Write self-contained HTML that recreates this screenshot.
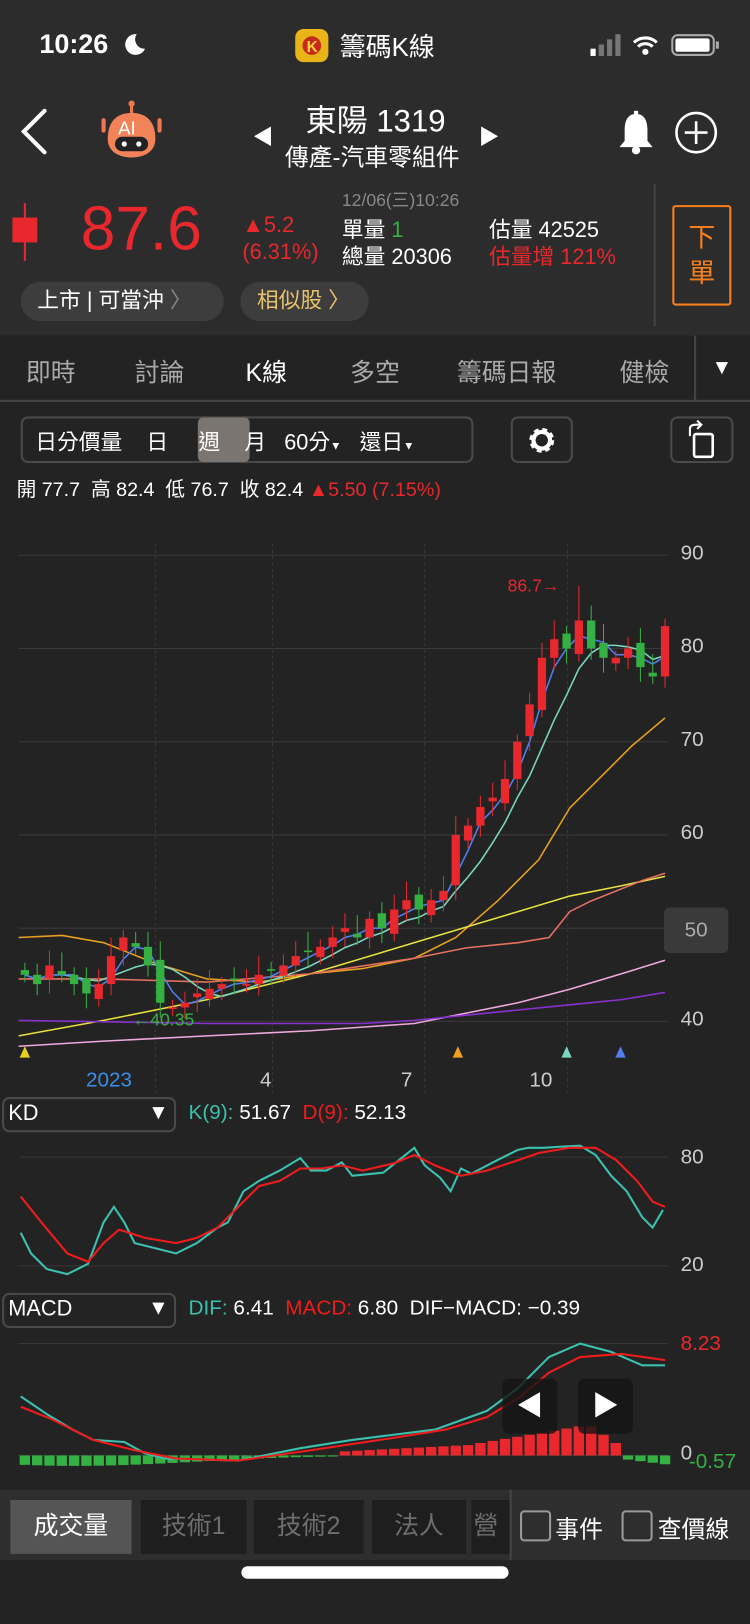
<!DOCTYPE html>
<html><head><meta charset="utf-8"><style>
*{margin:0;padding:0;box-sizing:border-box}
body{width:750px;height:1624px;overflow:hidden;background:#262626;font-family:"Liberation Sans","Noto Sans CJK TC",sans-serif;color:#fff}
#w{position:absolute;left:0;top:0;width:724px;height:1568px;transform:scale(1.03591);transform-origin:0 0;background:#232323}
.a{position:absolute;white-space:nowrap}
.hdr{position:absolute;left:0;top:0;width:724px;height:324px;background:#2c2c2c}
.pill{position:absolute;height:38px;border-radius:19px;background:#3d3d3d;font-size:21px;line-height:38px;padding-left:16px}
.tab{position:absolute;top:340px;font-size:24px;color:#aaa}
.box{position:absolute;border:2px solid #4a4a4a;border-radius:7px}
.ax{position:absolute;left:657px;font-size:20px;color:#ccc}
.bt{position:absolute;top:1448px;height:52px;background:#1e1e1e;color:#6e6e6e;font-size:24px;line-height:52px;text-align:center}
</style></head><body><div id="w">
<div class="hdr"></div>
<div class="a" style="left:38px;top:27px;font-size:26px;font-weight:bold">10:26</div>
<svg class="a" style="left:118px;top:31px" width="24" height="24"><path d="M14 2A10 10 0 1 0 22 16A9 9 0 0 1 14 2Z" fill="#fff"/></svg>
<svg class="a" style="left:283px;top:26px" width="36" height="36"><rect x="2" y="2" width="32" height="32" rx="8" fill="#e8b418"/><circle cx="18" cy="18" r="9" fill="#c62a1b"/><text x="13" y="24" font-size="15" font-weight="bold" fill="#ffd23a" font-family="Liberation Sans">K</text></svg>
<div class="a" style="left:328px;top:26px;font-size:25px">籌碼K線</div>
<svg class="a" style="left:570px;top:32px" width="125" height="24"><rect x="0" y="15" width="5" height="7" fill="#fff"/><rect x="8" y="11" width="5" height="11" fill="#777"/><rect x="16" y="6" width="5" height="16" fill="#777"/><rect x="24" y="1" width="5" height="21" fill="#777"/><path d="M42 9a16 16 0 0 1 22 0M46 13a10 10 0 0 1 14 0" stroke="#fff" stroke-width="3" fill="none"/><circle cx="53" cy="18" r="3" fill="#fff"/><rect x="79" y="2" width="40" height="19" rx="5" fill="none" stroke="#aaa" stroke-width="2"/><rect x="82" y="5" width="33" height="13" rx="2" fill="#fff"/><rect x="121" y="8" width="3" height="7" fill="#aaa"/></svg>
<svg class="a" style="left:16px;top:104px" width="32" height="46"><path d="M27 3L7 23L27 43" stroke="#fff" stroke-width="4" fill="none" stroke-linecap="round"/></svg>
<svg class="a" style="left:94px;top:96px" width="70" height="60"><line x1="33" y1="2" x2="33" y2="14" stroke="#f07850" stroke-width="3"/><circle cx="33" cy="4" r="3" fill="#f07850"/><rect x="4" y="18" width="4" height="14" rx="2" fill="#f07850"/><rect x="58" y="18" width="4" height="14" rx="2" fill="#f07850"/><path d="M10 38C10 20 20 13 33 13C46 13 56 20 56 38C56 50 46 56 33 56C20 56 10 50 10 38Z" fill="#f28359"/><rect x="17" y="36" width="32" height="14" rx="7" fill="#222"/><circle cx="26" cy="43" r="2.5" fill="#fff"/><circle cx="40" cy="43" r="2.5" fill="#fff"/><text x="20" y="34" font-size="18" fill="#fff" font-family="Liberation Sans">AI</text></svg>
<div class="a" style="left:244px;top:116px;font-size:20px">◀</div>
<div class="a" style="left:462px;top:116px;font-size:20px">▶</div>
<div class="a" style="left:295px;top:92px;font-size:30px">東陽 1319</div>
<div class="a" style="left:275px;top:133px;font-size:23px">傳產-汽車零組件</div>
<svg class="a" style="left:594px;top:106px" width="40" height="44"><path d="M20 4C11 4 9 12 9 20L9 30L4 36L36 36L31 30L31 20C31 12 29 4 20 4Z" fill="#fff"/><circle cx="20" cy="39" r="4" fill="#fff"/><rect x="18" y="1" width="4" height="5" fill="#fff"/></svg>
<svg class="a" style="left:650px;top:106px" width="44" height="44"><circle cx="22" cy="22" r="19" stroke="#fff" stroke-width="2.5" fill="none"/><path d="M22 11V33M11 22H33" stroke="#fff" stroke-width="2.5"/></svg>
<svg class="a" style="left:10px;top:196px" width="30" height="56"><line x1="14" y1="0" x2="14" y2="56" stroke="#e8282c" stroke-width="2"/><rect x="2" y="14" width="24" height="24" fill="#e8282c"/></svg>
<div class="a" style="left:78px;top:186px;font-size:60px;color:#e8282c">87.6</div>
<div class="a" style="left:234px;top:206px;font-size:21px;color:#e8282c">▲5.2</div>
<div class="a" style="left:234px;top:232px;font-size:21px;color:#e8282c">(6.31%)</div>
<div class="a" style="left:330px;top:179px;font-size:17px;color:#888">12/06(三)10:26</div>
<div class="a" style="left:330px;top:206px;font-size:21px">單量 <span style="color:#35b043">1</span></div>
<div class="a" style="left:330px;top:232px;font-size:21px">總量 20306</div>
<div class="a" style="left:472px;top:206px;font-size:21px">估量 42525</div>
<div class="a" style="left:472px;top:232px;font-size:21px;color:#e8282c">估量增 121%</div>
<div class="a" style="left:631px;top:178px;width:2px;height:137px;background:#444"></div>
<div class="a" style="left:649px;top:198px;width:57px;height:97px;border:2px solid #f7801c;border-radius:3px;color:#f7801c;font-size:26px;text-align:center;line-height:34px;padding-top:12px">下<br>單</div>
<div class="pill" style="left:20px;top:272px;width:196px">上市 | 可當沖 <span style="color:#888">〉</span></div>
<div class="pill" style="left:232px;top:272px;width:124px;color:#e9c36a">相似股 〉</div>
<div class="a" style="left:0;top:324px;width:724px;height:64px;background:#232323;border-bottom:2px solid #444"></div>
<div class="tab" style="left:25px">即時</div><div class="tab" style="left:130px">討論</div><div class="tab" style="left:237px;color:#fff">K線</div><div class="tab" style="left:338px">多空</div><div class="tab" style="left:441px">籌碼日報</div><div class="tab" style="left:598px">健檢</div>
<div class="a" style="left:670px;top:324px;width:2px;height:64px;background:#444"></div>
<div class="a" style="left:687px;top:344px;font-size:20px">▼</div>
<div class="box" style="left:20px;top:402px;width:437px;height:45px"></div>
<div class="a" style="left:191px;top:403px;width:50px;height:43px;background:#7a7570;border-radius:5px"></div>
<div class="a" style="left:34px;top:411px;font-size:21px">日分價量 &nbsp;&nbsp;&nbsp;日 &nbsp;&nbsp;&nbsp;&nbsp;週 &nbsp;&nbsp;&nbsp;月 &nbsp;&nbsp;60分<span style="font-size:11px">▼</span> &nbsp;&nbsp;還日<span style="font-size:11px">▼</span></div>
<div class="box" style="left:493px;top:402px;width:60px;height:45px"></div>
<svg class="a" style="left:508px;top:410px" width="30" height="30"><circle cx="15" cy="15" r="9" fill="none" stroke="#fff" stroke-width="6" stroke-dasharray="4 3.1"/><circle cx="15" cy="15" r="8" fill="none" stroke="#fff" stroke-width="4"/></svg>
<div class="box" style="left:647px;top:402px;width:61px;height:45px"></div>
<svg class="a" style="left:660px;top:405px" width="36" height="40"><rect x="10" y="14" width="18" height="22" rx="2" stroke="#fff" stroke-width="2.5" fill="none"/><path d="M6 16V9Q6 5 12 5H16M13 1L17 5L13 9" stroke="#fff" stroke-width="2" fill="none"/></svg>
<div class="a" style="left:16px;top:458px;font-size:19px">開 77.7 &nbsp;高 82.4 &nbsp;低 76.7 &nbsp;收 82.4 <span style="color:#e8282c">▲5.50 (7.15%)</span></div>
<svg id="ch" class="a" style="left:0;top:0" width="724" height="1440"></svg>
<div class="ax" style="top:523px">90</div><div class="ax" style="top:613px">80</div><div class="ax" style="top:703px">70</div><div class="ax" style="top:793px">60</div><div class="ax" style="top:973px">40</div>
<div class="a" style="left:641px;top:876px;width:62px;height:44px;background:#3a3a3a;border-radius:5px;color:#aaa;font-size:20px;text-align:center;line-height:44px">50</div>
<div class="a" style="left:490px;top:556px;font-size:17px;color:#e8282c">86.7→</div>
<div class="a" style="left:128px;top:975px;font-size:17px;color:#35b043">←40.35</div>
<div class="a" style="left:83px;top:1032px;font-size:20px;color:#3b8ee8">2023</div>
<div class="a" style="left:251px;top:1032px;font-size:20px;color:#ccc">4</div>
<div class="a" style="left:387px;top:1032px;font-size:20px;color:#ccc">7</div>
<div class="a" style="left:511px;top:1032px;font-size:20px;color:#ccc">10</div>
<div class="box" style="left:2px;top:1059px;width:168px;height:34px"></div>
<div class="a" style="left:8px;top:1063px;font-size:21px">KD</div><div class="a" style="left:143px;top:1063px;font-size:20px">▼</div>
<div class="a" style="left:182px;top:1063px;font-size:20px"><span style="color:#3cc0b0">K(9):</span> 51.67 &nbsp;<span style="color:#f01c1c">D(9):</span> 52.13</div>
<div class="ax" style="top:1106px">80</div><div class="ax" style="top:1210px">20</div>
<div class="box" style="left:2px;top:1248px;width:168px;height:34px"></div>
<div class="a" style="left:8px;top:1252px;font-size:21px">MACD</div><div class="a" style="left:143px;top:1252px;font-size:20px">▼</div>
<div class="a" style="left:182px;top:1252px;font-size:20px"><span style="color:#3cc0b0">DIF:</span> 6.41 &nbsp;<span style="color:#f01c1c">MACD:</span> 6.80 &nbsp;DIF−MACD: −0.39</div>
<div class="ax" style="top:1286px;color:#e8282c">8.23</div>
<div class="ax" style="top:1392px">0</div><div class="ax" style="top:1400px;left:665px;color:#35b043">-0.57</div>
<div class="a" style="left:485px;top:1331px;width:53px;height:53px;background:rgba(20,20,20,.8);border-radius:6px;font-size:26px;text-align:center;line-height:53px">◀</div>
<div class="a" style="left:558px;top:1331px;width:53px;height:53px;background:rgba(20,20,20,.8);border-radius:6px;font-size:26px;text-align:center;line-height:53px">▶</div>
<div class="a" style="left:0;top:1438px;width:724px;height:68px;background:#2e2e2e"></div>
<div class="bt" style="left:10px;width:117px;background:#555;color:#fff">成交量</div>
<div class="bt" style="left:136px;width:102px">技術1</div>
<div class="bt" style="left:245px;width:106px">技術2</div>
<div class="bt" style="left:359px;width:91px">法人</div>
<div class="bt" style="left:455px;width:37px;text-align:left;padding-left:2px">營</div>
<div class="a" style="left:492px;top:1438px;width:2px;height:68px;background:#444"></div>
<div class="a" style="left:502px;top:1458px;width:30px;height:30px;border:2px solid #999;border-radius:4px"></div>
<div class="a" style="left:536px;top:1457px;font-size:23px">事件</div>
<div class="a" style="left:600px;top:1458px;width:30px;height:30px;border:2px solid #999;border-radius:4px"></div>
<div class="a" style="left:635px;top:1457px;font-size:23px">查價線</div>
<div class="a" style="left:233px;top:1512px;width:258px;height:12px;background:#fff;border-radius:6px"></div>
</div>
<script>
var s=document.getElementById('ch'),h='';
function L(x1,y1,x2,y2,c,w,d){h+='<line x1="'+x1+'" y1="'+y1+'" x2="'+x2+'" y2="'+y2+'" stroke="'+c+'" stroke-width="'+(w||1)+'"'+(d?' stroke-dasharray="'+d+'"':'')+'/>';}
function P(pts,c,w){h+='<polyline fill="none" stroke="'+c+'" stroke-width="'+(w||1.5)+'" points="'+pts.map(function(p){return p.join(',')}).join(' ')+'"/>';}
[536,626,716,806,896,986].forEach(function(y){L(18,y,645,y,'#3a3a3a',1)});
[150,263,410,548].forEach(function(x){L(x,525,x,1055,'#3a3a3a',1,'3 3')});
L(18,1117,645,1117,'#383838');L(18,1222,645,1222,'#383838');L(18,1297,645,1297,'#383838');L(18,1405,645,1405,'#383838');
var C=[45,44,46,45,44,43,44,47,49,48,46,42,41.5,42,43,43.5,44,44.5,44,45,45.5,46,47,47.5,48,49,50,49,51,50,52,53,52,53,54,60,61,63,64,66,70,74,79,81,80,83,80,79,79,80,78,77,82.4];
var n=C.length,dx=(642-24)/(n-1);function Y(p){return 536+(90-p)*9}
function ma(k){return C.map(function(v,i){var a=0,c=0;for(var j=Math.max(0,i-k+1);j<=i;j++){a+=C[j];c++}return [24+i*dx,Y(a/c)]})}
P([[18,905],[60,903],[100,910],[150,930],[200,945],[250,948],[300,940],[350,935],[400,925],[440,905],[480,870],[520,830],[550,780],[580,750],[610,720],[642,693]],'#e8a020');
P([[18,1000],[100,985],[200,965],[300,940],[400,910],[450,895],[500,880],[550,865],[600,855],[642,846]],'#e8e040');
P([[18,945],[100,945],[200,948],[300,940],[400,925],[450,915],[500,910],[530,905],[550,880],[570,870],[620,850],[642,843]],'#e87060');
P([[18,1010],[100,1005],[200,1000],[300,995],[400,988],[450,978],[500,968],[550,955],[600,940],[642,927]],'#f0a8e0');
P([[18,985],[200,988],[350,988],[400,985],[450,980],[500,975],[550,970],[600,965],[642,958]],'#8a30d0');
P(ma(6),'#7ad8c0');P(ma(3),'#5080f0');
for(var i=0;i<n;i++){var c=C[i],o=i?C[i-1]+(i%3-1)*0.6:45.5;var up=c>=o;var col=up?'#e8282c':'#35b043';var x=24+i*dx;var hi=Math.max(o,c)+0.8+(i%4)*0.4,lo=Math.min(o,c)-0.8-(i%3)*0.4;if(i==45)hi=86.7;L(x,Y(hi),x,Y(lo),col,1);var t=Y(Math.max(o,c)),b=Y(Math.min(o,c));h+='<rect x="'+(x-4)+'" y="'+t+'" width="8" height="'+Math.max(1.5,b-t)+'" fill="'+col+'"/>';}
h+='<polygon points="24,1010 19,1021 29,1021" fill="#e8d020"/><polygon points="442,1010 437,1021 447,1021" fill="#f0a020"/><polygon points="547,1010 542,1021 552,1021" fill="#7ad8c0"/><polygon points="599,1010 594,1021 604,1021" fill="#5080f0"/>';
for(var i=0;i<n;i++){var x=24+i*dx,v;if(i<26)v=-12*Math.sin(Math.PI*Math.min(1,(i+8)/34))*(1-i/26)-1;else if(i<n-4)v=(i<36?4+(i-26)*0.6:i<46?10+(i-36)*2:28-(i-46)*8);else v=-4-(i-(n-4))*1.5;if(v>0&&v<2)v=2;var y0=1405;var col=v>=0?'#e8282c':'#35b043';var hgt=Math.abs(v);h+='<rect x="'+(x-5)+'" y="'+(v>=0?y0-hgt:y0)+'" width="10" height="'+hgt+'" fill="'+col+'"/>';}
P([[20,1190],[30,1210],[45,1225],[65,1230],[85,1220],[100,1180],[110,1165],[120,1180],[130,1200],[150,1205],[170,1210],[190,1200],[210,1185],[220,1180],[235,1150],[250,1140],[270,1130],[290,1118],[300,1130],[315,1130],[330,1122],[340,1135],[370,1132],[385,1120],[400,1108],[410,1125],[425,1137],[435,1150],[445,1128],[455,1133],[480,1120],[500,1110],[510,1108],[525,1108],[540,1107],[560,1106],[575,1115],[590,1135],[605,1150],[620,1175],[630,1185],[640,1168]],'#3cc0b0',2);
P([[20,1155],[40,1180],[65,1210],[85,1218],[100,1200],[115,1187],[140,1195],[170,1200],[190,1195],[210,1185],[230,1165],[250,1145],[270,1140],[290,1128],[310,1128],[330,1125],[350,1130],[380,1123],[400,1115],[420,1125],[445,1135],[470,1130],[500,1120],[520,1113],[550,1108],[575,1108],[595,1120],[615,1140],[630,1160],[642,1165]],'#f01c1c',2);
P([[20,1348],[45,1365],[70,1380],[90,1390],[120,1392],[140,1403],[160,1408],[230,1410],[290,1398],[340,1390],[380,1385],[420,1380],[470,1362],[500,1340],[530,1310],[560,1297],[590,1305],[620,1318],[642,1318]],'#3cc0b0',2);
P([[20,1358],[50,1370],[90,1390],[130,1400],[170,1408],[230,1410],[300,1400],[380,1388],[430,1380],[470,1368],[500,1350],[530,1325],[560,1310],[600,1307],[642,1313]],'#f01c1c',2);
s.innerHTML=h;
</script>
</body></html>
